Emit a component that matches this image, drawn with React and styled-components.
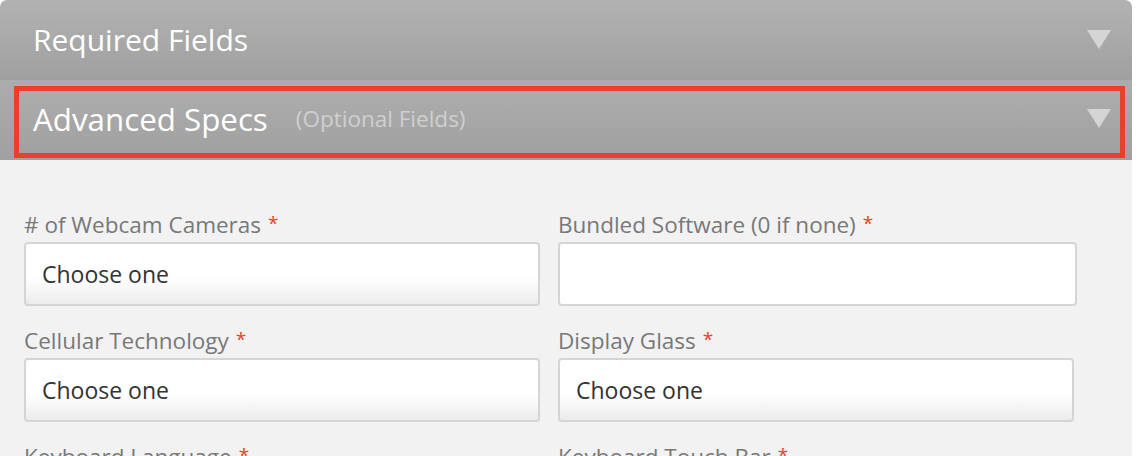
import styled, { createGlobalStyle } from "styled-components";

const GlobalStyle = createGlobalStyle`
  body {
    margin: 0;
    background: #ffffff;
    font-family: "Open Sans", "Liberation Sans", sans-serif;
  }
`;

const Panel = styled.div`
  width: 1132px;
  border-radius: 7px 7px 0 0;
  overflow: hidden;
`;

const HeaderBar = styled.div`
  height: 80px;
  box-sizing: border-box;
  display: flex;
  align-items: center;
  justify-content: space-between;
  padding: 0 21px 2px 33px;
  background: linear-gradient(#b2b2b2, #a0a0a0);
`;

const HighlightWrap = styled.div`
  height: 80px;
  box-sizing: border-box;
  padding: 6px 7px 2px 14px;
  background: linear-gradient(#acacac, #a0a0a0);
`;

const HighlightBox = styled.div`
  height: 100%;
  box-sizing: border-box;
  border: 5px solid #e8412a;
  display: flex;
  align-items: center;
  padding: 0 9px 7px 14px;
  background: linear-gradient(#acacac, #a1a1a1);
`;

const Title = styled.span`
  color: #ffffff;
  font-size: ${(p) => p.$size || 30}px;
  font-weight: 400;
`;

const Hint = styled.span`
  color: #cfcfcf;
  font-size: 22.5px;
  margin-left: 28px;
`;

const Caret = styled.span`
  margin-left: auto;
  width: 0;
  height: 0;
  border-left: 12.5px solid transparent;
  border-right: 12.5px solid transparent;
  border-top: 19px solid #d5d5d5;
`;

const Body = styled.div`
  background: #f2f2f2;
  padding: 50px 0 40px 24px;
  display: grid;
  grid-template-columns: 516px 519px;
  column-gap: 18px;
  row-gap: 20px;
`;

const Field = styled.div`
  display: flex;
  flex-direction: column;
  gap: 6px;
`;

const Label = styled.label`
  height: 26px;
  line-height: 26px;
  font-size: 22.5px;
  color: #787878;
  white-space: nowrap;
`;

const Req = styled.span`
  color: #e8412a;
  margin-left: 7px;
  font-size: 19px;
  vertical-align: 3px;
`;

const Control = styled.div`
  width: ${(p) => p.$w || 516}px;
  height: 64px;
  box-sizing: border-box;
  border: 2px solid #d6d4d4;
  border-radius: 4px;
  display: flex;
  align-items: center;
  padding-left: 16px;
  font-size: 23px;
  color: #333333;
  background: ${(p) =>
    p.$select ? "linear-gradient(#ffffff 55%, #ececec)" : "#ffffff"};
`;

const fields = [
  { label: "# of Webcam Cameras", select: true },
  { label: "Bundled Software (0 if none)", select: false, w: 519 },
  { label: "Cellular Technology", select: true },
  { label: "Display Glass", select: true },
  { label: "Keyboard Language", select: true },
  { label: "Keyboard Touch Bar", select: true },
];

export default function App() {
  return (
    <>
      <GlobalStyle />
      <Panel>
        <HeaderBar>
          <Title>Required Fields</Title>
          <Caret />
        </HeaderBar>
        <HighlightWrap>
          <HighlightBox>
            <Title $size={31.3}>Advanced Specs</Title>
            <Hint>(Optional Fields)</Hint>
            <Caret />
          </HighlightBox>
        </HighlightWrap>
        <Body>
          {fields.map((f) => (
            <Field key={f.label}>
              <Label>
                {f.label}
                <Req>*</Req>
              </Label>
              <Control $select={f.select} $w={f.w}>
                {f.select ? "Choose one" : ""}
              </Control>
            </Field>
          ))}
        </Body>
      </Panel>
    </>
  );
}
